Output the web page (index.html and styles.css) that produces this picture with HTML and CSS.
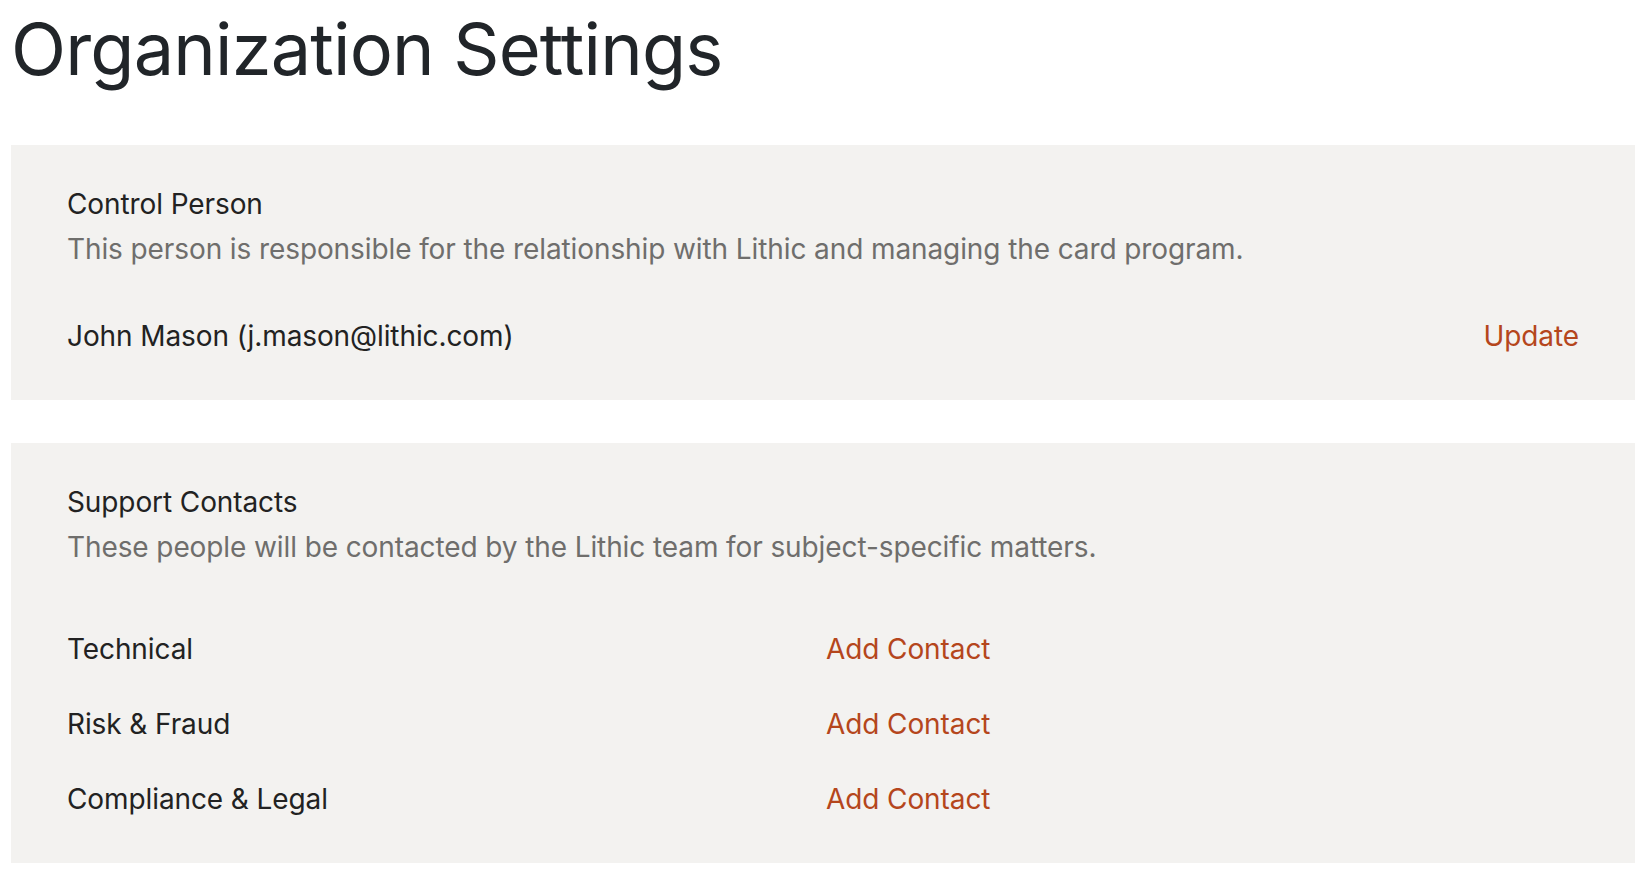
FILE: index.html
```html
<!DOCTYPE html>
<html lang="en">
<head>
<meta charset="utf-8">
<title>Organization Settings</title>
<link rel="stylesheet" href="styles.css">
</head>
<body>
<main class="page">
  <h1 class="page-title">Organization Settings</h1>

  <section class="card">
    <header class="card-head">
      <h2 class="card-title">Control Person</h2>
      <p class="card-desc">This person is responsible for the relationship with Lithic and managing the card program.</p>
    </header>
    <div class="person-row">
      <span class="person-name">John Mason (j.mason@lithic.com)</span>
      <a class="link" href="#">Update</a>
    </div>
  </section>

  <section class="card">
    <header class="card-head">
      <h2 class="card-title">Support Contacts</h2>
      <p class="card-desc">These people will be contacted by the Lithic team for subject-specific matters.</p>
    </header>
    <div class="contacts">
      <div class="contact-row">
        <span class="contact-label">Technical</span>
        <a class="link" href="#">Add Contact</a>
      </div>
      <div class="contact-row">
        <span class="contact-label">Risk &amp; Fraud</span>
        <a class="link" href="#">Add Contact</a>
      </div>
      <div class="contact-row">
        <span class="contact-label">Compliance &amp; Legal</span>
        <a class="link" href="#">Add Contact</a>
      </div>
    </div>
  </section>
</main>
</body>
</html>
```

FILE: styles.css
```css
html, body {
  margin: 0;
  padding: 0;
  background: #ffffff;
}

body {
  font-family: Inter, "Noto Sans", "Liberation Sans", sans-serif;
  color: #222222;
}

.page {
  padding: 6px 9px 0 11px;
  display: flex;
  flex-direction: column;
}

.page-title {
  margin: 0 0 53px 0;
  font-size: 72px;
  font-weight: 400;
  line-height: 86px;
  color: #212529;
  letter-spacing: -0.8px;
}

.card {
  background: #f3f2f0;
  padding: 37px 56px 41px 56px;
  margin-bottom: 43px;
  font-size: 28px;
  line-height: 45px;
  letter-spacing: -0.1px;
}

.card-head {
  display: flex;
  flex-direction: column;
}

.card-title {
  margin: 0;
  font-size: inherit;
  font-weight: 400;
  line-height: inherit;
  color: #222222;
}

.card-desc {
  margin: 0;
  color: #6f6e6c;
}

.person-row {
  margin-top: 42px;
  display: flex;
  justify-content: space-between;
  align-items: baseline;
}

.contacts {
  margin-top: 57px;
  display: flex;
  flex-direction: column;
  gap: 30px;
}

.contact-row {
  display: grid;
  grid-template-columns: 1fr 1fr;
  column-gap: 6px;
}

.link {
  color: #b5461c;
  text-decoration: none;
}
```
